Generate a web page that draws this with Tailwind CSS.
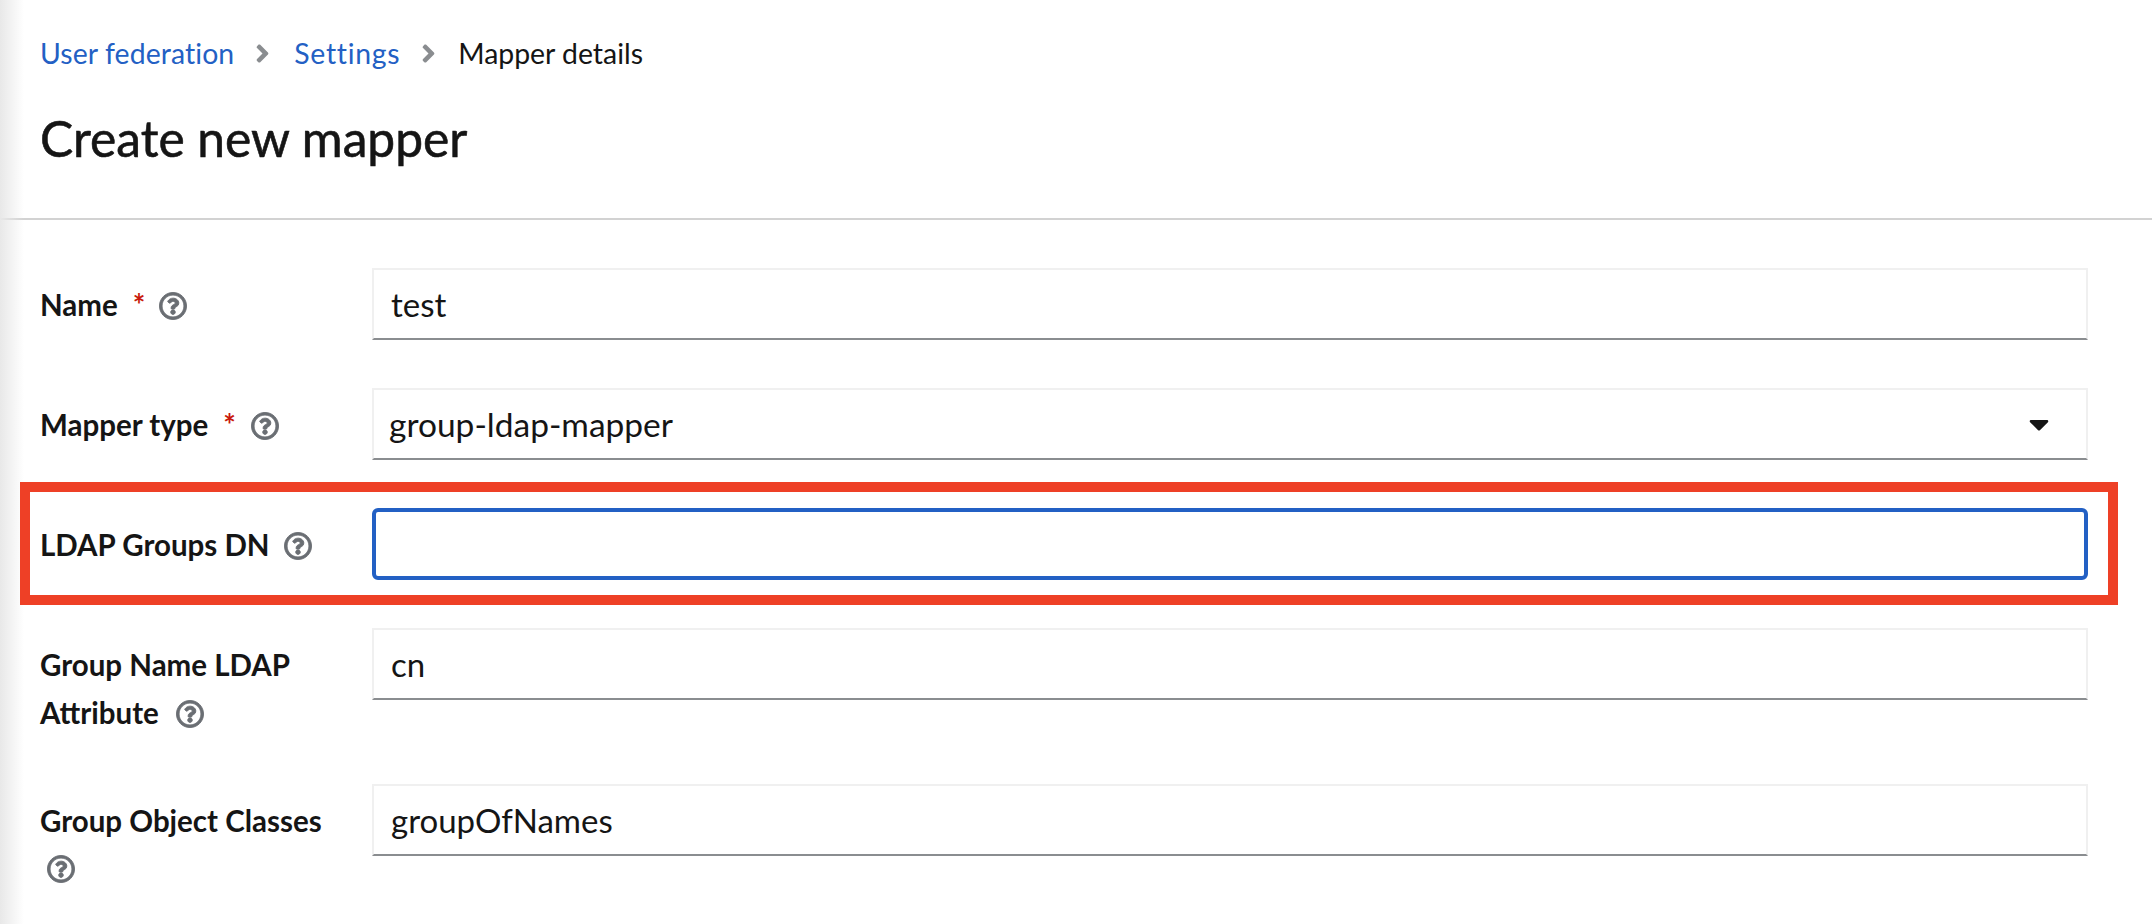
<!DOCTYPE html>
<html lang="en">
<head>
  <meta charset="UTF-8">
  <title>Create new mapper</title>
  <script src="https://cdn.jsdelivr.net/npm/@tailwindcss/browser@4"></script>
</head>
<body class="bg-white text-[#151515] font-['Lato','Noto_Sans',sans-serif]">
  <svg class="hidden" xmlns="http://www.w3.org/2000/svg">
    <symbol id="help" viewBox="0 0 512 512">
      <path d="M256 8C119.043 8 8 119.083 8 256c0 136.997 111.043 248 248 248s248-111.003 248-248C504 119.083 392.957 8 256 8zm0 448c-110.532 0-200-89.431-200-200 0-110.495 89.472-200 200-200 110.491 0 200 89.471 200 200 0 110.569-89.431 200-200 200zm107.244-255.2c0 67.052-72.421 68.084-72.421 92.863V300c0 6.627-5.373 12-12 12h-45.647c-6.627 0-12-5.373-12-12v-8.659c0-35.745 27.1-50.034 47.579-61.516 17.561-9.845 28.324-16.541 28.324-29.579 0-17.246-21.999-28.693-39.784-28.693-23.189 0-33.894 10.977-48.942 29.969-4.057 5.12-11.46 6.071-16.666 2.124l-27.824-21.098c-5.107-3.872-6.251-11.066-2.644-16.363C184.846 131.491 214.94 112 261.794 112c49.071 0 101.45 38.304 101.45 88.8zM298 368c0 23.159-18.841 42-42 42s-42-18.841-42-42 18.841-42 42-42 42 18.841 42 42z"></path>
    </symbol>
    <symbol id="angle" viewBox="0 0 256 512">
      <path d="M224.3 273l-136 136c-9.4 9.4-24.6 9.4-33.9 0l-22.6-22.6c-9.4-9.4-9.4-24.6 0-33.9l96.4-96.4-96.4-96.4c-9.4-9.4-9.4-24.6 0-33.9L54.3 103c9.4-9.4 24.6-9.4 33.9 0l136 136c9.5 9.4 9.5 24.6.1 34z"></path>
    </symbol>
  </svg>

  <div class="relative h-[924px] overflow-hidden">
    <!-- sidebar shadow -->
    <div class="absolute inset-y-0 left-0 w-[24px] bg-linear-to-r from-[#e8e8e8] to-transparent"></div>

    <header class="h-[220px] border-b-2 border-[#d2d2d2] pl-[40px] pr-[41px] pt-[36px]">
      <nav class="flex items-center h-[34px] text-[28.4px]">
        <a class="text-[#2360c4] tracking-[0.1px]">User federation</a>
        <svg class="w-[15px] h-[29px] ml-[21px] mr-[24px] fill-[#8a8d90]"><use href="#angle"></use></svg>
        <a class="text-[#2360c4] tracking-[0.7px]">Settings</a>
        <svg class="w-[15px] h-[29px] ml-[21px] mr-[22px] fill-[#8a8d90]"><use href="#angle"></use></svg>
        <span>Mapper details</span>
      </nav>
      <h1 class="mt-[38px] text-[49.7px] leading-[60px] [-webkit-text-stroke:0.6px_#151515]">Create new mapper</h1>
    </header>

    <form class="pt-[48px] pl-[40px] pr-[64px] flex flex-col gap-[48px]">
      <div class="grid grid-cols-[332px_1fr]">
        <label class="pt-[13px] pr-[4px] text-[29.5px] leading-[48px] font-bold">Name<span class="ml-[15px] text-[#c9190b]">*</span><svg class="inline-block w-[28px] h-[28px] ml-[14px] -mt-[5px] fill-[#6a6e73] stroke-[#6a6e73] [stroke-width:16]"><use href="#help"></use></svg></label>
        <input type="text" value="test" class="h-[72px] w-full border-2 border-[#f0f0f0] border-b-[#8a8d90] pl-[17px] text-[33px] text-[#151515] outline-none">
      </div>

      <div class="grid grid-cols-[332px_1fr]">
        <label class="pt-[13px] pr-[4px] text-[29.5px] leading-[48px] font-bold">Mapper type<span class="ml-[15px] text-[#c9190b]">*</span><svg class="inline-block w-[28px] h-[28px] ml-[15px] -mt-[5px] fill-[#6a6e73] stroke-[#6a6e73] [stroke-width:16]"><use href="#help"></use></svg></label>
        <div class="h-[72px] flex items-center justify-between border-2 border-[#f0f0f0] border-b-[#8a8d90] pl-[15px] pr-[37px] text-[33.5px]">
          <span>group-ldap-mapper</span>
          <svg class="w-[20px] h-[32px] fill-[#151515]" viewBox="0 0 320 512"><path d="M31.3 192h257.3c17.8 0 26.7 21.5 14.1 34.1L174.1 354.8c-7.8 7.8-20.5 7.8-28.3 0L17.2 226.1C4.6 213.5 13.5 192 31.3 192z"></path></svg>
        </div>
      </div>

      <div class="relative grid grid-cols-[332px_1fr]">
        <!-- highlight box from the screenshot annotation -->
        <div class="absolute -top-[26px] -bottom-[25px] -left-[20px] -right-[30px] border-[10px] border-[#ee4026] pointer-events-none"></div>
        <label class="pt-[13px] pr-[4px] text-[29.5px] leading-[48px] font-bold">LDAP Groups DN<svg class="inline-block w-[28px] h-[28px] ml-[14px] -mt-[5px] fill-[#6a6e73] stroke-[#6a6e73] [stroke-width:16]"><use href="#help"></use></svg></label>
        <input type="text" class="h-[72px] w-full rounded-[6px] border-[4px] border-[#2360c4] pl-[15px] text-[33px] outline-none">
      </div>

      <div class="grid grid-cols-[332px_1fr] h-[108px]">
        <label class="pt-[13px] pr-[4px] text-[29.5px] leading-[48px] font-bold">Group Name LDAP Attribute<svg class="inline-block w-[28px] h-[28px] ml-[17px] -mt-[5px] fill-[#6a6e73] stroke-[#6a6e73] [stroke-width:16]"><use href="#help"></use></svg></label>
        <input type="text" value="cn" class="h-[72px] w-full border-2 border-[#f0f0f0] border-b-[#8a8d90] pl-[17px] text-[33px] text-[#151515] outline-none">
      </div>

      <div class="grid grid-cols-[332px_1fr]">
        <label class="pt-[13px] pr-[4px] text-[29.5px] leading-[48px] font-bold">Group Object Classes<br><svg class="inline-block w-[28px] h-[28px] ml-[7px] -mt-[6px] fill-[#6a6e73] stroke-[#6a6e73] [stroke-width:16]"><use href="#help"></use></svg></label>
        <input type="text" value="groupOfNames" class="h-[72px] w-full border-2 border-[#f0f0f0] border-b-[#8a8d90] pl-[17px] text-[33px] text-[#151515] outline-none">
      </div>
    </form>
  </div>
</body>
</html>
